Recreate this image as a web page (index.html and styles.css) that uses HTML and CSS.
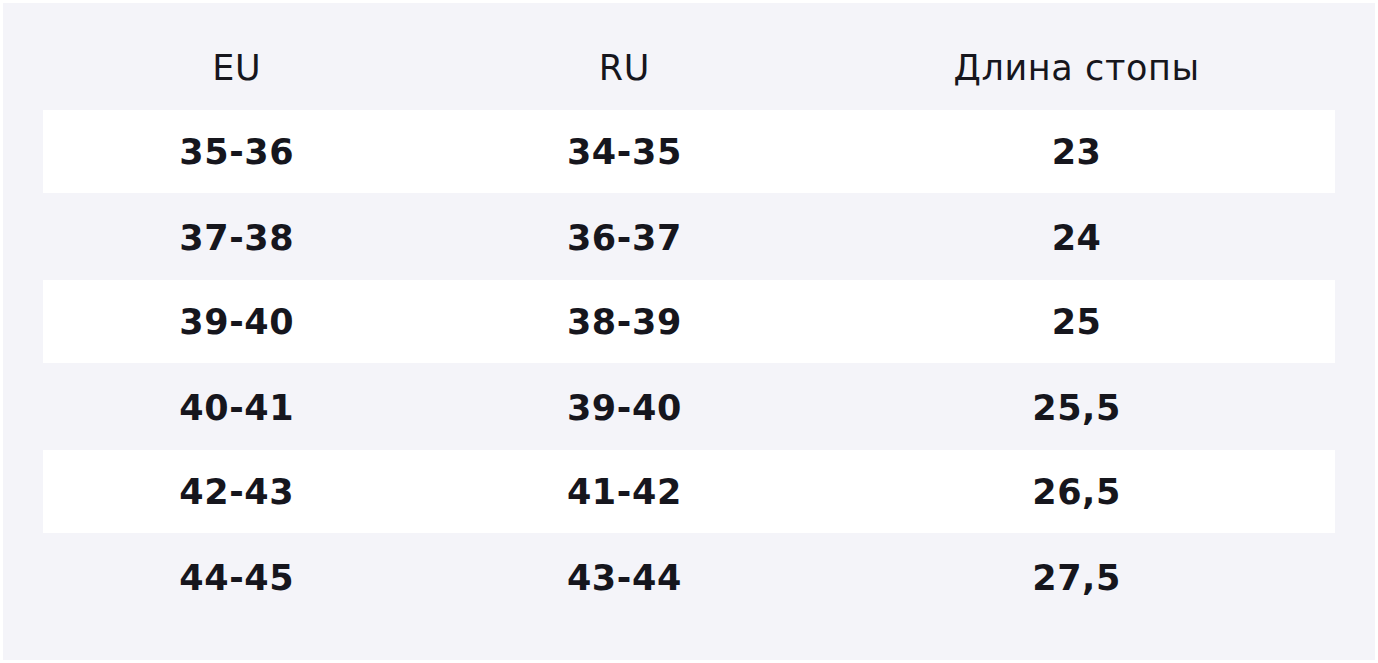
FILE: index.html
```html
<!DOCTYPE html>
<html lang="ru">
<head>
<meta charset="utf-8">
<title>Размеры</title>
<link rel="stylesheet" href="styles.css">
</head>
<body>
<div class="panel">
  <table class="sizes">
    <colgroup>
      <col class="c1"><col class="c2"><col class="c3">
    </colgroup>
    <thead>
      <tr><th>EU</th><th>RU</th><th>Длина стопы</th></tr>
    </thead>
    <tbody>
      <tr class="odd"><td>35-36</td><td>34-35</td><td>23</td></tr>
      <tr><td>37-38</td><td>36-37</td><td>24</td></tr>
      <tr class="odd"><td>39-40</td><td>38-39</td><td>25</td></tr>
      <tr><td>40-41</td><td>39-40</td><td>25,5</td></tr>
      <tr class="odd"><td>42-43</td><td>41-42</td><td>26,5</td></tr>
      <tr><td>44-45</td><td>43-44</td><td>27,5</td></tr>
    </tbody>
  </table>
</div>
</body>
</html>
```

FILE: styles.css
```css
html, body {
  margin: 0;
  padding: 0;
  background: #ffffff;
}
body {
  padding: 3px;
  font-family: "DejaVu Sans", sans-serif;
  color: #16161d;
}
.panel {
  background: #f4f4f9;
  width: 1372px;
  height: 657px;
  box-sizing: border-box;
  padding: 22px 40px 40px;
}
.sizes {
  width: 100%;
  border-collapse: collapse;
  table-layout: fixed;
}
.c1 { width: 30%; }
.c2 { width: 30%; }
.c3 { width: 40%; }
.sizes th {
  height: 85px;
  padding: 0;
  font-size: 35px;
  font-weight: normal;
  letter-spacing: 0.6px;
  text-align: center;
  vertical-align: middle;
}
.sizes td {
  height: 85px;
  padding: 0;
  font-size: 35px;
  font-weight: bold;
  letter-spacing: 0.6px;
  text-align: center;
  vertical-align: middle;
}
.sizes tr.odd td {
  background: #ffffff;
  border-bottom: 2px solid #f4f4f9;
  height: 83px;
}
```
